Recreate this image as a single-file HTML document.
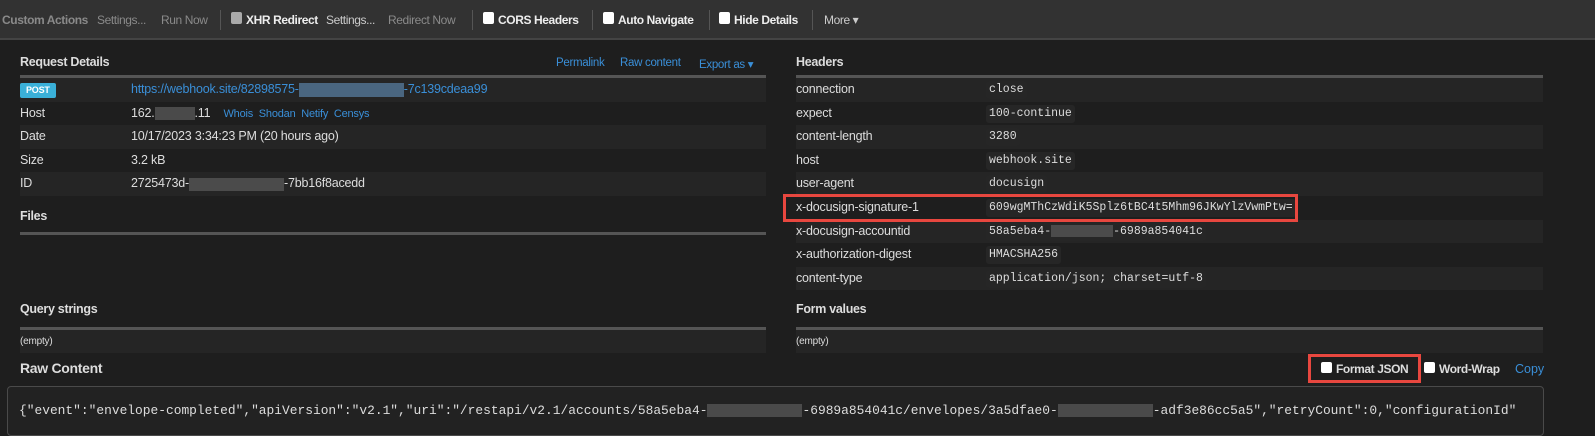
<!DOCTYPE html>
<html><head><style>
*{margin:0;padding:0;box-sizing:border-box}
body{width:1595px;height:429px;background:#1e1e1e;font-family:"Liberation Sans",sans-serif;color:#ddd;font-size:12.5px;overflow:hidden;position:relative}
.a{position:absolute;white-space:nowrap}
.tb{position:absolute;left:0;top:0;width:1595px;height:40px;background:#323232;border-bottom:2px solid #444}
.tb span{position:absolute;top:13px;font-size:12px;white-space:nowrap;letter-spacing:-0.4px}
.g{color:#8a8a8a}.w{color:#eee;font-weight:bold}.n{color:#ccc}
.sep{position:absolute;top:10px;width:1px;height:20px;background:#555}
.cb{position:absolute;top:12px;width:11px;height:12px;background:#fff;border-radius:2px}
.h{position:absolute;font-weight:bold;color:#ddd;font-size:12.5px;letter-spacing:-0.3px}
.ul{position:absolute;height:3px;background:#555}
.row{position:absolute;height:23.6px;line-height:23.6px;letter-spacing:-0.2px}
.odd{background:#252525}
.k{position:absolute;left:0;color:#ddd}
.v{position:absolute;color:#ddd}
.m{font-family:"Liberation Mono",monospace;font-size:11.5px;background:#262626;padding:1px 3px;border-radius:3px;letter-spacing:0}
.lnk{color:#3a8fd8}
.blur{display:inline-block;background:#555;height:13px;vertical-align:middle;opacity:.8}
.blurb{display:inline-block;background:#4a6680;height:14px;vertical-align:middle}
</style></head><body>
<div class="tb">
<span class="g" style="left:2px;font-weight:bold">Custom Actions</span>
<span class="g" style="left:97px">Settings...</span>
<span class="g" style="left:161px">Run Now</span>
<div class="sep" style="left:220px"></div>
<div class="cb" style="left:231px;background:#aaa"></div>
<span class="w" style="left:246px">XHR Redirect</span>
<span class="n" style="left:326px">Settings...</span>
<span class="g" style="left:388px">Redirect Now</span>
<div class="sep" style="left:472px"></div>
<div class="cb" style="left:483px"></div>
<span class="w" style="left:498px">CORS Headers</span>
<div class="sep" style="left:592px"></div>
<div class="cb" style="left:603px"></div>
<span class="w" style="left:618px">Auto Navigate</span>
<div class="sep" style="left:709px"></div>
<div class="cb" style="left:719px"></div>
<span class="w" style="left:734px">Hide Details</span>
<div class="sep" style="left:812px"></div>
<span class="n" style="left:824px">More ▾</span>
</div>

<div class="h" style="left:20px;top:55px">Request Details</div>
<div class="a lnk" style="left:556px;top:57px;font-size:11.5px;letter-spacing:-0.3px">Permalink</div>
<div class="a lnk" style="left:620px;top:57px;font-size:11.5px;letter-spacing:-0.3px">Raw content</div>
<div class="a lnk" style="left:699px;top:57px;font-size:11.5px;letter-spacing:-0.3px">Export as ▾</div>
<div class="ul" style="left:20px;top:75px;width:746px"></div>

<div class="row odd" style="left:20px;top:78px;width:746px"><span class="k" style="top:5px;line-height:13px;background:#3ab0d8;color:#fff;font-size:9px;font-weight:bold;padding:1px 6px;border-radius:2px">POST</span><span class="v lnk" style="left:111px">https://webhook.site/82898575-<span class="blurb" style="width:105px"></span>-7c139cdeaa99</span></div>
<div class="row" style="left:20px;top:101.6px;width:746px"><span class="k">Host</span><span class="v" style="left:111px">162.<span class="blur" style="width:40px"></span>.11 &nbsp;&nbsp;&nbsp;<span class="lnk" style="font-size:11px">Whois &nbsp;Shodan &nbsp;Netify &nbsp;Censys</span></span></div>
<div class="row odd" style="left:20px;top:125.2px;width:746px"><span class="k">Date</span><span class="v" style="left:111px">10/17/2023 3:34:23 PM (20 hours ago)</span></div>
<div class="row" style="left:20px;top:148.8px;width:746px"><span class="k">Size</span><span class="v" style="left:111px">3.2 kB</span></div>
<div class="row odd" style="left:20px;top:172.4px;width:746px"><span class="k">ID</span><span class="v" style="left:111px">2725473d-<span class="blur" style="width:95px"></span>-7bb16f8acedd</span></div>

<div class="h" style="left:20px;top:209px">Files</div>
<div class="ul" style="left:20px;top:232px;width:746px"></div>

<div class="h" style="left:796px;top:55px">Headers</div>
<div class="ul" style="left:796px;top:75px;width:747px"></div>
<div class="row odd" style="left:796px;top:78px;width:747px"><span class="k">connection</span><span class="v m" style="left:190px;top:3px;line-height:16px">close</span></div>
<div class="row" style="left:796px;top:101.6px;width:747px"><span class="k">expect</span><span class="v m" style="left:190px;top:3px;line-height:16px">100-continue</span></div>
<div class="row odd" style="left:796px;top:125.2px;width:747px"><span class="k">content-length</span><span class="v m" style="left:190px;top:3px;line-height:16px">3280</span></div>
<div class="row" style="left:796px;top:148.8px;width:747px"><span class="k">host</span><span class="v m" style="left:190px;top:3px;line-height:16px">webhook.site</span></div>
<div class="row odd" style="left:796px;top:172.4px;width:747px"><span class="k">user-agent</span><span class="v m" style="left:190px;top:3px;line-height:16px">docusign</span></div>
<div class="row" style="left:796px;top:196px;width:747px"><span class="k">x-docusign-signature-1</span><span class="v m" style="left:190px;top:3px;line-height:16px">609wgMThCzWdiK5Splz6tBC4t5Mhm96JKwYlzVwmPtw=</span></div>
<div class="row odd" style="left:796px;top:219.6px;width:747px"><span class="k">x-docusign-accountid</span><span class="v m" style="left:190px;top:3px;line-height:16px">58a5eba4-<span class="blur" style="width:62px;height:12px"></span>-6989a854041c</span></div>
<div class="row" style="left:796px;top:243.2px;width:747px"><span class="k">x-authorization-digest</span><span class="v m" style="left:190px;top:3px;line-height:16px">HMACSHA256</span></div>
<div class="row odd" style="left:796px;top:266.8px;width:747px"><span class="k">content-type</span><span class="v m" style="left:190px;top:3px;line-height:16px">application/json; charset=utf-8</span></div>
<div class="a" style="left:783px;top:194px;width:515px;height:28px;border:3px solid #e8473f"></div>

<div class="h" style="left:20px;top:302px">Query strings</div>
<div class="ul" style="left:20px;top:327px;width:746px"></div>
<div class="row odd" style="left:20px;top:330px;width:746px;height:23px"><span class="k" style="font-size:10px">(empty)</span></div>
<div class="h" style="left:796px;top:302px">Form values</div>
<div class="ul" style="left:796px;top:327px;width:747px"></div>
<div class="row odd" style="left:796px;top:330px;width:747px;height:23px"><span class="k" style="font-size:10px">(empty)</span></div>

<div class="h" style="left:20px;top:360px;font-size:14px">Raw Content</div>
<div class="a" style="left:1308px;top:354px;width:113px;height:29px;border:3px solid #e8473f"></div>
<div class="a" style="left:1321px;top:362px;width:11px;height:11px;background:#fff;border-radius:2px"></div>
<div class="a" style="left:1336px;top:362px;font-weight:bold;font-size:12px;color:#ddd;letter-spacing:-0.4px">Format JSON</div>
<div class="a" style="left:1424px;top:362px;width:11px;height:11px;background:#fff;border-radius:2px"></div>
<div class="a" style="left:1439px;top:362px;font-weight:bold;font-size:12px;color:#ddd;letter-spacing:-0.4px">Word-Wrap</div>
<div class="a lnk" style="left:1515px;top:362px;font-size:12.5px">Copy</div>
<div class="a" style="left:7px;top:386px;width:1537px;height:50px;border:1px solid #4a4a4a;border-radius:4px;background:#222;overflow:hidden"><div class="a" style="left:11px;top:16px;font-family:'Liberation Mono',monospace;font-size:12.9px;color:#ddd">{"event":"envelope-completed","apiVersion":"v2.1","uri":"/restapi/v2.1/accounts/58a5eba4-<span class="blur" style="width:95px"></span>-6989a854041c/envelopes/3a5dfae0-<span class="blur" style="width:95px"></span>-adf3e86cc5a5","retryCount":0,"configurationId"</div></div>
</body></html>
